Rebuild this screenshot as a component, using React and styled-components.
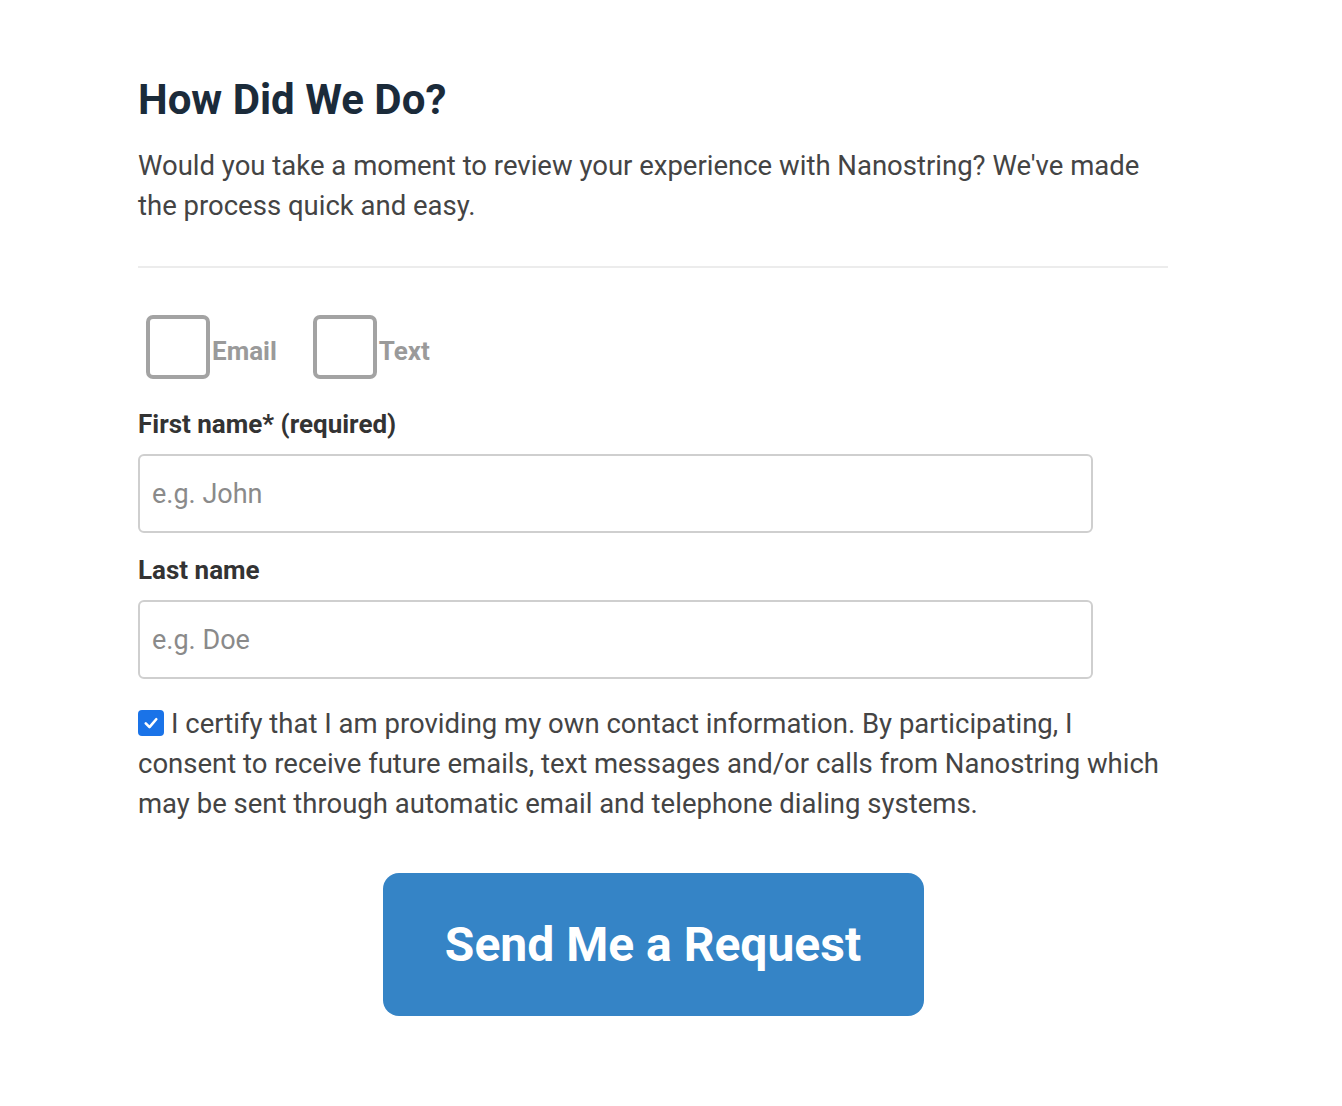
import React, { useState } from 'react';
import styled, { createGlobalStyle } from 'styled-components';

const GlobalStyle = createGlobalStyle`
  body {
    margin: 0;
    background: #fff;
    font-family: Roboto, 'Liberation Sans', sans-serif;
  }
`

const Wrapper = styled.div`
  width: 1030px;
  padding: 74px 0 60px 138px;
`

const Title = styled.h1`
  margin: 0;
  font-size: 42px;
  line-height: 52px;
  font-weight: 700;
  color: #1b2b3a;
`

const Intro = styled.p`
  margin: 20px 0 0;
  font-size: 27.5px;
  line-height: 40px;
  color: #444;
`

const Divider = styled.hr`
  margin: 40px 0 0;
  border: 0;
  border-top: 2px solid #ececec;
`

const Options = styled.div`
  display: flex;
  gap: 36px;
  margin: 47px 0 0 8px;
`

const Option = styled.label`
  display: flex;
  align-items: center;
  font-size: 26px;
  font-weight: 700;
  color: #9a9a9a;
  cursor: pointer;
`

const OptionText = styled.span`
  padding-top: 8px;
`

const Box = styled.span`
  width: 64px;
  height: 64px;
  box-sizing: border-box;
  border: 4px solid #a3a3a3;
  border-radius: 7px;
  margin-right: 2px;
  background: ${p => (p.$on ? '#e8f0fb' : '#fff')};
`

const Field = styled.div`
  margin-top: ${p => p.$top}px;
`

const Label = styled.label`
  display: block;
  font-size: 26px;
  line-height: 30px;
  font-weight: 700;
  color: #333;
`

const Input = styled.input`
  display: block;
  box-sizing: border-box;
  width: 955px;
  height: 79px;
  margin-top: 15px;
  padding: 0 12px;
  border: 2px solid #cfcfcf;
  border-radius: 6px;
  font-family: Roboto, 'Liberation Sans', sans-serif;
  font-size: 27px;
  color: #333;
  outline: none;
  &::placeholder {
    color: #8a8a8a;
  }
`

const Consent = styled.p`
  margin: 25px 0 0;
  font-size: 27.5px;
  line-height: 40px;
  color: #444;
`

const Tick = styled.span`
  display: inline-flex;
  align-items: center;
  justify-content: center;
  width: 26px;
  height: 26px;
  border-radius: 4px;
  background: #1a73e8;
  vertical-align: 1px;
  margin-right: 7px;
`

const Actions = styled.div`
  display: flex;
  justify-content: center;
  margin-top: 49px;
`

const Submit = styled.button`
  width: 541px;
  height: 143px;
  border: 0;
  border-radius: 16px;
  background: #3584c6;
  color: #fff;
  font-family: Roboto, 'Liberation Sans', sans-serif;
  font-size: 48px;
  font-weight: 700;
  cursor: pointer;
`

function ChoiceBox({ label }) {
  const [on, setOn] = useState(false)
  return (
    <Option onClick={() => setOn(!on)}>
      <Box $on={on} />
      <OptionText>{label}</OptionText>
    </Option>
  )
}

export default function App() {
  return (
    <Wrapper>
      <GlobalStyle />
      <Title>How Did We Do?</Title>
      <Intro>
        Would you take a moment to review your experience with Nanostring? We've made the process quick and easy.
      </Intro>
      <Divider />
      <Options>
        <ChoiceBox label="Email" />
        <ChoiceBox label="Text" />
      </Options>
      <Field $top={30}>
        <Label htmlFor="first">First name* (required)</Label>
        <Input id="first" placeholder="e.g. John" />
      </Field>
      <Field $top={22}>
        <Label htmlFor="last">Last name</Label>
        <Input id="last" placeholder="e.g. Doe" />
      </Field>
      <Consent>
        <Tick>
          <svg width="18" height="18" viewBox="0 0 24 24" fill="none" stroke="#fff" strokeWidth="3.5" strokeLinecap="round" strokeLinejoin="round">
            <polyline points="5 12.5 10 17.5 19 7" />
          </svg>
        </Tick>
        I certify that I am providing my own contact information. By participating, I consent to receive future emails, text messages and/or calls from Nanostring which may be sent through automatic email and telephone dialing systems.
      </Consent>
      <Actions>
        <Submit>Send Me a Request</Submit>
      </Actions>
    </Wrapper>
  )
}
